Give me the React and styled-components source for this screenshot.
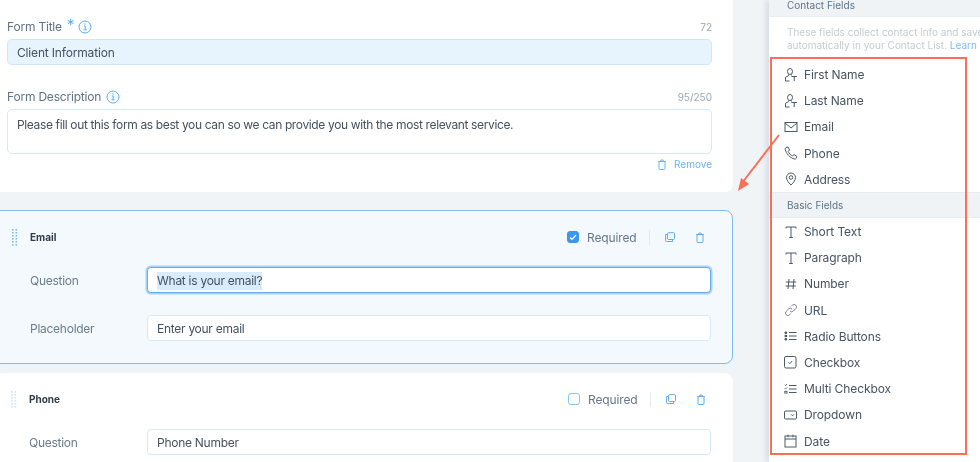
import React from "react";
import styled, { createGlobalStyle } from "styled-components";

const Global = createGlobalStyle`
  html, body { margin: 0; padding: 0; background: #f0f4f7; }
  body { font-family: "Inter", "Noto Sans", sans-serif; color: #3b4a5a; }
  * { box-sizing: border-box; }
`;

const Page = styled.div`
  position: relative;
  width: 980px;
  height: 462px;
  overflow: hidden;
  display: flex;
  background: #f0f4f7;
  filter: blur(0.35px);
`;
const Main = styled.div`
  width: 733px;
  flex: none;
  display: flex;
  flex-direction: column;
`;
const FormCard = styled.section`
  height: 192px;
  flex: none;
  background: #fff;
  border-radius: 0 0 8px 0;
  padding: 18px 21px 0 7px;
  margin-bottom: 18px;
`;
const LabelRow = styled.div`
  display: flex;
  align-items: center;
  height: 16px;
  padding-top: 1px;
  margin-bottom: 5px;
`;
const FieldLabel = styled.span`
  font-size: 12px;
  letter-spacing: -0.2px;
  color: #5f7385;
`;
const Star = styled.span`
  color: #5aaef0;
  font-size: 15px;
  line-height: 15px;
  margin: -4px -1px 0 5px;
`;
const Count = styled.span`
  margin-left: auto;
  font-size: 10px;
  color: #9aa7b3;
`;
const TitleInput = styled.div`
  height: 26px;
  border: 1px solid #cde7fb;
  border-radius: 5px;
  background: #e7f4fe;
  padding: 1px 9px 0;
  display: flex;
  align-items: center;
  font-size: 12px;
  letter-spacing: -0.17px;
  color: #44525f;
  margin-bottom: 23px;
`;
const DescInput = styled.div`
  height: 45px;
  border: 1px solid #d5e9fb;
  border-radius: 5px;
  padding: 7px 9px 0;
  font-size: 12px;
  letter-spacing: -0.36px;
  line-height: 16px;
  color: #44525f;
`;
const RemoveRow = styled.div`
  display: flex;
  justify-content: flex-end;
  align-items: center;
  gap: 8px;
  margin-top: 3px;
  font-size: 10px;
  color: #6db3f2;
  height: 14px;
`;
const FieldCard = styled.section`
  margin-left: ${(p) => (p.$active ? "-1px" : "0")};
  height: ${(p) => (p.$active ? "154px" : "120px")};
  flex: none;
  background: ${(p) => (p.$active ? "#f4f9fe" : "#fff")};
  border: ${(p) => (p.$active ? "1px solid #7ebcf6" : "1px solid #fff")};
  border-radius: 0 8px 8px 0;
  margin-bottom: 9px;
  padding: ${(p) => (p.$active ? "17px 21px 0 12px" : "16px 21px 0 10px")};
`;
const CardHead = styled.div`
  display: flex;
  align-items: center;
  height: 18px;
  margin-bottom: 21px;
  margin-right: ${(p) => (p.$active ? "1px" : "0")};
`;
const CardTitle = styled.span`
  font-size: 10px;
  font-weight: 700;
  color: #2f3d4c;
  margin-left: 12px;
`;
const Check = styled.span`
  margin-left: auto;
  width: 12px;
  height: 12px;
  border-radius: 3px;
  border: 1px solid ${(p) => (p.$on ? "#3b97ee" : "#8cc6f7")};
  background: ${(p) => (p.$on ? "#3b97ee" : "#fff")};
  display: flex;
  align-items: center;
  justify-content: center;
`;
const Req = styled.span`
  font-size: 12px;
  letter-spacing: -0.12px;
  color: #66788a;
  margin-left: 8px;
  width: 49px;
`;
const Divider = styled.span`
  width: 1px;
  height: 15px;
  background: #e3e9ee;
  margin: 0 15px 0 13px;
`;
const IconGap = styled.span`
  display: flex;
  margin-left: ${(p) => p.$ml || 0}px;
`;
const FormRow = styled.div`
  display: flex;
  align-items: center;
  height: 26px;
  margin-bottom: 22px;
`;
const RowLabel = styled.span`
  flex: 1;
  padding: 1px 0 0 18px;
  font-size: 12px;
  letter-spacing: -0.26px;
  color: #6b7c8c;
`;
const TextBox = styled.div`
  flex: none;
  width: 564px;
  height: 26px;
  background: #fff;
  border: 1px solid ${(p) => (p.$focus ? "#66aef2" : "#d5e9fb")};
  box-shadow: ${(p) => (p.$focus ? "0 0 0 1.5px #a8d3f8" : "none")};
  border-radius: 4px;
  padding: 1px 9px 0;
  display: flex;
  align-items: center;
  font-size: 12px;
  letter-spacing: -0.27px;
  color: #44525f;
`;
const Selected = styled.span`
  background: #d8ecfc;
  height: 18px;
  display: flex;
  align-items: center;
`;
const Side = styled.aside`
  margin-left: 36px;
  width: 211px;
  flex: none;
  background: #fff;
  box-shadow: -3px 0 5px rgba(120, 135, 150, 0.2);
`;
const ContactHead = styled.div`
  height: 17px;
  background: #eff3f6;
  padding-left: 18px;
  font-size: 10px;
  line-height: 10px;
  color: #5c7488;
  border-bottom: 1px solid #e9eef2;
`;
const Intro = styled.p`
  margin: 0;
  height: 35px;
  padding: 9px 0 0 18px;
  white-space: nowrap;
  font-size: 10px;
  line-height: 13px;
  color: #c5ccd2;
`;
const Learn = styled.span`
  color: #7dbdf5;
`;
const List = styled.div`
  padding-top: 9px;
`;
const Item = styled.div`
  height: 26.2px;
  display: flex;
  align-items: center;
  padding: 1px 0 0 15px;
  font-size: 12px;
  letter-spacing: -0.1px;
  color: #465463;
`;
const ItemIcon = styled.span`
  width: 20px;
  height: 18px;
  flex: none;
  display: flex;
  align-items: center;
`;
const SectionBand = styled.div`
  height: 26px;
  background: #eff3f6;
  border-top: 1px solid #e6ecf0;
  border-bottom: 1px solid #e6ecf0;
  padding-left: 18px;
  display: flex;
  align-items: center;
  font-size: 10px;
  color: #5c7488;
`;
const RedBox = styled.div`
  position: absolute;
  left: 770px;
  top: 57px;
  width: 197px;
  height: 398px;
  border: 2px solid #fb6f58;
  pointer-events: none;
`;
const ArrowLayer = styled.svg`
  position: absolute;
  left: 725px;
  top: 125px;
  pointer-events: none;
`;

const S = { fill: "none", stroke: "#4b5968", strokeWidth: 1 };
const Ic = ({ children }) => (
  <svg width="14" height="14" viewBox="0 0 14 14" {...S}>{children}</svg>
);
const icons = {
  name: (
    <Ic>
      <ellipse cx="6" cy="3.5" rx="2.500" ry="3" />
      <path d="M4.500 6.500v1.200L1.500 9.300v3.700h4M7.500 6.500v1" />
      <path d="M7.500 8.500h5.500M10.200 8.500v4.500" />
    </Ic>
  ),
  email: <Ic><rect x="1" y="2.500" width="12" height="9" /><path d="M1 3l6 5 6-5" /></Ic>,
  phone: <Ic><path d="M2 1.500l2-.5 1.600 3L4.300 5.300c.6 2 2.300 3.800 4.300 4.600l1.400-1.300 2.800 1.700-.6 2c-.3.7-1 .9-1.800.7C6 11.800 2.300 8 1.200 3.300c-.1-.8.200-1.500.8-1.800z" /></Ic>,
  address: <Ic><path d="M7 13C4.500 10.500 2.500 8.200 2.500 5.500a4.500 4.500 0 0 1 9 0C11.500 8.200 9.500 10.500 7 13z" /><circle cx="7" cy="5.500" r="1.800" /></Ic>,
  text: <Ic><path d="M2 3.500V2h10v1.500M7 2v10.500M5.200 12.500h3.600" /></Ic>,
  number: <Ic><path d="M5 2L4 12M10 2L9 12M1.800 5h10.400M1.500 9h10.400" /></Ic>,
  url: <Ic><path d="M6 8a2.400 2.400 0 0 0 3.400 0l2.400-2.400a2.400 2.400 0 0 0-3.400-3.400L7.200 3.400" stroke="#7c8894" /><path d="M8 6a2.400 2.400 0 0 0-3.400 0L2.200 8.400a2.400 2.400 0 0 0 3.400 3.400l1.200-1.200" stroke="#7c8894" /></Ic>,
  radio: (
    <Ic>
      <rect x="0.500" y="2.500" width="2.600" height="2.400" rx="1" fill="#4b5968" stroke="none" />
      <rect x="0.500" y="5.800" width="2.600" height="2.400" rx="1" fill="#4b5968" stroke="none" />
      <rect x="0.500" y="9.100" width="2.600" height="2.400" rx="1" fill="#4b5968" stroke="none" />
      <path d="M5 3.500h7.500M5 7h7.500M5 10.500h7.500" />
    </Ic>
  ),
  checkbox: <Ic><rect x="0.500" y="1.500" width="11.500" height="11.500" rx="1.500" /><path d="M4.500 7.300l1.300 1.300 2.400-2.600" /></Ic>,
  multi: (
    <Ic>
      <path d="M.8 2.800l.8.8 1.300-1.500M.8 6.300l.8.8 1.300-1.500" strokeWidth=".9" />
      <rect x="0.800" y="9.300" width="2.200" height="1.800" strokeWidth=".9" />
      <path d="M5 3.500h7.500M5 7h7.500M5 10.500h7.500" />
    </Ic>
  ),
  dropdown: <Ic><rect x="0.500" y="3" width="12" height="8" rx="1" /><path d="M7 6.300l1.500 1.500 1.500-1.500" /></Ic>,
  date: <Ic><rect x="1" y="2" width="11" height="11" /><path d="M1 5h11M4 .7v2.600M9 .7v2.600" /></Ic>,
};

const Info = () => (
  <svg width="14" height="14" viewBox="0 0 14 14" style={{ marginLeft: 5 }} fill="none" stroke="#5aaef0">
    <circle cx="7" cy="7" r="6" />
    <path d="M5.800 6h1.400v3.800M5.600 9.800h3" />
    <circle cx="7" cy="4" r=".7" fill="#5aaef0" stroke="none" />
  </svg>
);
const Trash = ({ color = "#5aaef0" }) => (
  <svg width="8" height="11" viewBox="0 0 8 11" fill="none" stroke={color}>
    <path d="M1 2.500h6v7a1 1 0 0 1-1 1H2a1 1 0 0 1-1-1z" />
    <path d="M.2 2.500h7.600M2.800 2.500V1h2.400v1.500" />
  </svg>
);
const Copy = () => (
  <svg width="10" height="10" viewBox="0 0 10 10" fill="none" stroke="#5aaef0">
    <rect x="2.500" y="0.700" width="7" height="6.800" rx="1" />
    <path d="M2.500 2.500H.6v6a1 1 0 0 0 1 1h6V7.500" />
  </svg>
);
const Grip = ({ color }) => (
  <svg width="6" height="17" viewBox="0 0 6 17" fill={color}>
    {[0, 3, 6, 9, 12, 15].map((y) => (
      <g key={y}>
        <rect x="0" y={y} width="1.600" height="1.600" />
        <rect x="3.500" y={y} width="1.600" height="1.600" />
      </g>
    ))}
  </svg>
);
const Tick = () => (
  <svg width="8" height="7" viewBox="0 0 8 7" fill="none" stroke="#fff" strokeWidth="1.200">
    <path d="M1 3.500l2 2 4-4.500" />
  </svg>
);

const contact = [
  ["name", "First Name"],
  ["name", "Last Name"],
  ["email", "Email"],
  ["phone", "Phone"],
  ["address", "Address"],
];
const basic = [
  ["text", "Short Text"],
  ["text", "Paragraph"],
  ["number", "Number"],
  ["url", "URL"],
  ["radio", "Radio Buttons"],
  ["checkbox", "Checkbox"],
  ["multi", "Multi Checkbox"],
  ["dropdown", "Dropdown"],
  ["date", "Date"],
];

const Field = ({ icon, label }) => (
  <Item>
    <ItemIcon>{icons[icon]}</ItemIcon>
    {label}
  </Item>
);
const Head = ({ title, on, grip, active }) => (
  <CardHead $active={active}>
    <Grip color={grip} />
    <CardTitle>{title}</CardTitle>
    <Check $on={on}>{on && <Tick />}</Check>
    <Req>Required</Req>
    <Divider />
    <IconGap><Copy /></IconGap>
    <IconGap $ml={21}><Trash /></IconGap>
    <IconGap $ml={6} />
  </CardHead>
);

export default function App() {
  return (
    <Page>
      <Global />
      <Main>
        <FormCard>
          <LabelRow>
            <FieldLabel>Form Title</FieldLabel>
            <Star>*</Star>
            <Info />
            <Count>72</Count>
          </LabelRow>
          <TitleInput>Client Information</TitleInput>
          <LabelRow>
            <FieldLabel>Form Description</FieldLabel>
            <Info />
            <Count>95/250</Count>
          </LabelRow>
          <DescInput>Please fill out this form as best you can so we can provide you with the most relevant service.</DescInput>
          <RemoveRow><Trash color="#6db3f2" />Remove</RemoveRow>
        </FormCard>
        <FieldCard $active>
          <Head title="Email" on active grip="#7ebcf6" />
          <FormRow>
            <RowLabel>Question</RowLabel>
            <TextBox $focus><Selected>What is your email?</Selected></TextBox>
          </FormRow>
          <FormRow>
            <RowLabel>Placeholder</RowLabel>
            <TextBox>Enter your email</TextBox>
          </FormRow>
        </FieldCard>
        <FieldCard>
          <Head title="Phone" grip="#cfe6fa" />
          <FormRow>
            <RowLabel>Question</RowLabel>
            <TextBox>Phone Number</TextBox>
          </FormRow>
        </FieldCard>
      </Main>
      <Side>
        <ContactHead>Contact Fields</ContactHead>
        <Intro>
          These fields collect contact info and save<br />
          automatically in your Contact List. <Learn>Learn more</Learn>
        </Intro>
        <List>
          {contact.map(([i, l]) => <Field key={l} icon={i} label={l} />)}
        </List>
        <SectionBand>Basic Fields</SectionBand>
        {basic.map(([i, l]) => <Field key={l} icon={i} label={l} />)}
      </Side>
      <RedBox />
      <ArrowLayer width="60" height="70" viewBox="0 0 60 70" fill="none">
        <path d="M54 10L17 58" stroke="#fb6f58" strokeWidth="2" />
        <path d="M13 66l3-13 8 6z" fill="#fb6f58" />
      </ArrowLayer>
    </Page>
  );
}
